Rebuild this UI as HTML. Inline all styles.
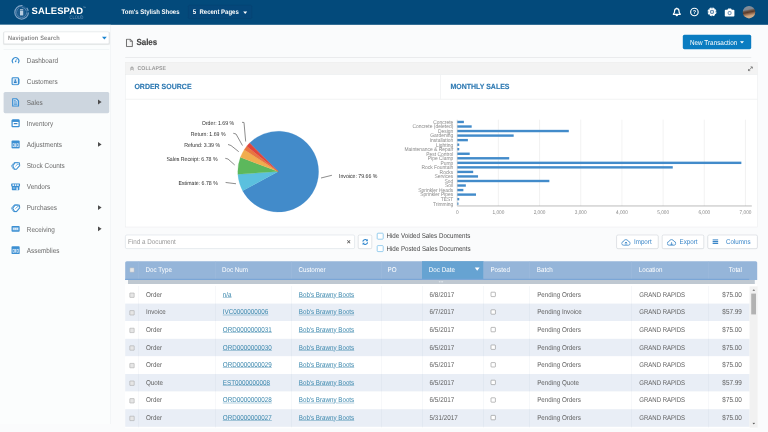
<!DOCTYPE html>
<html lang="en">
<head>
<meta charset="utf-8">
<title>Sales - SalesPad Cloud</title>
<style>
*{box-sizing:border-box;margin:0;padding:0}
html,body{width:768px;height:432px;overflow:hidden;background:#fafbfc}
body{font-family:"Liberation Sans",sans-serif;color:#555;text-rendering:geometricPrecision}
#app{position:absolute;left:0;top:0;width:1920px;height:1080px;transform:scale(.4);transform-origin:0 0;background:#fafbfc;overflow:hidden;filter:blur(1.3px)}
#app div,#app span,#app a{position:absolute;white-space:nowrap}
/* header */
#hdr{left:0;top:0;width:1920px;height:61.5px;background:#034a7b}
#logo{left:33.500px;top:10.500px;width:40px;height:40px}
#brand{left:79px;top:14px;font-size:23.5px;line-height:24px;font-weight:bold;color:#fff;letter-spacing:.3px}
#tm{left:208px;top:16px;font-size:4.5px;line-height:5px;color:#a9bfd4}
#cloud{left:173.5px;top:37px;font-size:12.7px;line-height:13px;color:#6d95bb;letter-spacing:0;transform:scaleX(.78);transform-origin:0 0}
#co{left:304px;top:20px;font-size:16.8px;line-height:20px;font-weight:bold;color:#fff;transform:scaleX(.893);transform-origin:0 0}
#recent{left:470px;top:13px;width:160px;height:34px;border:1px solid #0b4270;border-radius:3px;background:#05477a}
#recent span{left:11px;top:7px;font-size:16.8px;line-height:20px;font-weight:bold;color:#fff;white-space:pre;transform:scaleX(.893);transform-origin:0 0}
.caretw{width:0;height:0;border-left:5.8px solid transparent;border-right:5.8px solid transparent;border-top:6.5px solid #fff}
.hi{top:15px;width:30px;height:30px}
#avatar{left:1857px;top:15px;width:31px;height:31px;border-radius:50%;background:linear-gradient(168deg,#8a939d 0,#7f8893 30%,#6b5549 40%,#5a3b2b 50%,#9a6f52 62%,#c9a582 75%,#cdb094 100%);overflow:hidden}
/* sidebar */
#side{left:0;top:61.5px;width:275.5px;height:998px;background:#fbfdfd;border-right:1.5px solid #e9edef}
#nsearch{left:9px;top:17.5px;width:264px;height:31px;border:1px solid #cfd4d9;box-shadow:0 1px 2px rgba(0,0,0,.08);border-radius:3px;background:#fff}
#nsearch span{left:10px;top:6px;font-size:15.7px;line-height:18px;font-weight:bold;color:#8a8a8a;letter-spacing:.5px;transform:scaleX(.893);transform-origin:0 0}
#nsearch i{position:absolute;left:245px;top:12px;width:0;height:0;border-left:6px solid transparent;border-right:6px solid transparent;border-top:7px solid #1b84d0}
#nsep{left:9px;top:62px;width:264px;height:1px;background:#e3e7ea}
.ni{left:9px;width:264px;height:53px;border-radius:4px}
.ni.act{background:#cdd6df}
.ni .ico{left:18.2px;top:15px;width:24px;height:22.2px}
.ni .ico svg{width:24px;height:22.2px;display:block}
.ni .nt{left:58px;top:16.5px;font-size:17.9px;line-height:20px;color:#6a6a6a;transform:scaleX(.893);transform-origin:0 0}
.ni .arr{left:235.5px;top:19.5px;width:0;height:0;border-top:6.9px solid transparent;border-bottom:6.9px solid transparent;border-left:9.2px solid #4c4c4c}
/* main */
#title{left:341px;top:91px;font-size:22px;line-height:28px;font-weight:bold;color:#444;-webkit-text-stroke:.4px #444;transform:scaleX(.905);transform-origin:0 0}
#ticon{left:314px;top:95.5px;width:19px;height:22.5px}
#newbtn{left:1707px;top:87px;width:171px;height:36px;background:#0a7cc1;border-radius:4px}
#newbtn span{left:17.5px;top:9px;font-size:17.8px;line-height:20px;color:#fff;transform:scaleX(.893);transform-origin:0 0}
#newbtn i{position:absolute;left:143px;top:16px;width:0;height:0;border-left:5.8px solid transparent;border-right:5.8px solid transparent;border-top:6.5px solid #fff}
#hr{left:313px;top:143px;width:1565px;height:2px;background:#e7e8e9}
#cbar{left:313px;top:155px;width:1581px;height:32px;background:#f3f3f3;border:1px solid #ebebeb}
#cbar span{left:30px;top:6px;font-size:14px;line-height:18px;font-weight:bold;color:#999;letter-spacing:0;transform:scaleX(.93);transform-origin:0 0}
#panel{left:313px;top:186px;width:1581px;height:382px;background:#fff;border:1px solid #e4e6e8}
#phdr{left:313px;top:247px;width:1581px;height:2px;background:#eef0f1}
#pvd{left:1100px;top:187px;width:2px;height:61px;background:#f0f2f3}
.ptitle{top:206px;font-size:18.9px;line-height:22px;font-weight:bold;color:#2a77b1;-webkit-text-stroke:.3px #2a77b1;transform:scaleX(.926);transform-origin:0 0}
svg text.pl{font-family:"Liberation Sans",sans-serif;font-size:14.56px;fill:#2b2b2b}
svg text.bl{font-family:"Liberation Sans",sans-serif;font-size:13.8px;fill:#8a8a8a}
svg text.al{font-family:"Liberation Sans",sans-serif;font-size:13.2px;fill:#868686}
#chart{position:absolute;left:0;top:0;width:1920px;height:1080px;pointer-events:none}
/* toolbar */
#find{left:313px;top:587px;width:574px;height:35px;border:1px solid #c6ced8;border-radius:4px;background:#fff}
#find span{left:6px;top:7px;font-size:17.6px;line-height:20px;color:#999;transform:scaleX(.893);transform-origin:0 0}
#find b{position:absolute;left:553px;top:8px;font-size:17px;line-height:20px;color:#555;font-weight:bold}
#refresh{left:895px;top:587px;width:35px;height:35px;border:1px solid #bcc2c9;box-shadow:0 1px 1px rgba(0,0,0,.06);border-radius:4px;background:#fff}
.chk{left:942px;width:17px;height:17px;border:2px solid #7fc2ea;border-radius:3px;background:#fff}
.chl{left:966px;font-size:17.4px;line-height:20px;color:#444;transform:scaleX(.893);transform-origin:0 0}
.tbtn{top:587px;height:35px;border:1px solid #bcc2c9;box-shadow:0 1px 1px rgba(0,0,0,.06);border-radius:4px;background:#fff}
.tbtn span{top:7px;font-size:17.4px;line-height:20px;color:#3a86c8;transform:scaleX(.893);transform-origin:0 0}
/* grid */
#ghead{left:313px;top:653px;width:1580px;height:47px;background:#95b5d9;border-radius:4px 4px 0 0}
#ghb{left:313px;top:696.5px;width:1560px;height:3.5px;background:#7ba6d6}
#ghead .h{top:0;height:43.5px;font-size:17.5px;line-height:43.5px;color:#fff}
#ghead .h span{left:0;top:0;transform:scaleX(.893);transform-origin:0 0}
#ghead .h span.r{left:auto;right:0;transform-origin:100% 0}
#ghead u{position:absolute;top:0;width:1px;height:43.5px;background:#a2bede}
#gsort{left:741.5px;top:653px;width:154.5px;height:47px;background:#66a3d2}
#gfil{left:320px;top:700px;width:1567px;height:10px;background:#bfc8d1}
#gwhite{left:313px;top:710px;width:1580px;height:361px;background:#fff}
.row{left:313px;width:1561px;height:44px;background:#fff}
.row.alt{background:#e9eef6}
.row .c{top:0;height:44px;font-size:17.5px;line-height:43.5px;color:#5f5f5f;transform:scaleX(.893);transform-origin:0 0}
#grows u{position:absolute;top:0;width:1.2px;height:360px;background:rgba(160,175,195,.22)}
.row a{position:static!important;color:#3a87ad;text-decoration:underline;font-size:17.4px}
.c0{left:0;width:33px;transform:none!important}
.c1{left:52px}
.c2{left:243.5px}
.c2 a{font-size:17.65px!important}
.c3{left:434px}
.c4{left:640px}
.c5{left:761px;font-size:17.7px!important}
.c6{left:896px;width:115px;transform:none!important}
.c7{left:1030px}
.c8{left:1285px;font-size:16.9px!important}
.c9{left:auto!important;right:19px;text-align:right;font-size:17.9px!important;transform-origin:100% 0!important}
.cb{left:10.5px;top:16.5px;width:12px;height:12px;border:1.5px solid #8c8c8c;border-radius:1.2px;background:#e6e6e6}
.pb{left:18px;top:15px;width:12px;height:12px;border:1.6px solid #555;border-radius:2px;background:#fff}
#sbar{left:1874px;top:716px;width:20px;height:352.5px;background:#f1f1f1}
#sthumb{left:1878px;top:734px;width:12px;height:52px;background:#b2b2b2}
</style>
</head>
<body>
<div id="app">
  <div id="hdr">
    <svg id="logo" style="position:absolute" viewBox="0 0 40 40">
      <circle cx="20" cy="20" r="17" fill="#1c5a8b"/>
      <circle cx="20" cy="20" r="17" fill="none" stroke="#80a4c7" stroke-width="2.800" stroke-dasharray="82 12 8 5"/>
      <circle cx="20" cy="20" r="12.500" fill="#0d5285" stroke="#5c8ab5" stroke-width="2.200" stroke-dasharray="50 8 16 5"/>
      <circle cx="20" cy="20" r="9.500" fill="#1f5c8d"/>
      <rect x="16" y="12.500" width="8" height="2.200" fill="#e6eef5"/>
      <rect x="16" y="16" width="8" height="11.500" fill="#b9cde0"/>
    </svg>
    <div id="brand">SALESPAD</div>
    <div id="tm">TM</div>
    <div id="cloud">CLOUD</div>
    <div id="co">Tom's Stylish Shoes</div>
    <div id="recent"><span>5  Recent Pages</span><i class="caretw" style="position:absolute;left:136.5px;top:14.5px"></i></div>
    <svg class="hi" style="position:absolute;left:1677px" viewBox="0 0 30 30"><path d="M15 6.500c-3.600 0-5.500 2.700-5.500 6 0 3.600-1 5.800-3 7.200v1.300h17v-1.300c-2-1.400-3-3.600-3-7.200 0-3.300-1.900-6-5.500-6z" fill="none" stroke="#fff" stroke-width="3" stroke-linejoin="round"/><path d="M12 22.500a3 3 0 0 0 6 0z" fill="#fff"/><rect x="13.500" y="4" width="3" height="3" rx="1.500" fill="#fff"/></svg>
    <svg class="hi" style="position:absolute;left:1721px" viewBox="0 0 30 30"><circle cx="15" cy="15" r="9.400" fill="none" stroke="#fff" stroke-width="3"/><text x="15" y="20" text-anchor="middle" font-family="Liberation Sans, sans-serif" font-weight="bold" font-size="14" fill="#fff">?</text></svg>
    <svg class="hi" style="position:absolute;left:1765px" viewBox="0 0 30 30"><circle cx="15" cy="14.700" r="9.800" fill="none" stroke="#fff" stroke-width="2.600" stroke-dasharray="5.200 2.500"/><circle cx="15" cy="14.700" r="7.300" fill="#5d87ae" stroke="#fff" stroke-width="3.800"/><circle cx="15" cy="14.700" r="2.800" fill="#dfe8f0"/></svg>
    <svg class="hi" style="position:absolute;left:1809px;top:16px" viewBox="0 0 30 30"><path d="M5 8.500h4.500l2-3.500h7l2 3.500H25a2 2 0 0 1 2 2v13a2 2 0 0 1-2 2H5a2 2 0 0 1-2-2v-13a2 2 0 0 1 2-2z" fill="#fff"/><circle cx="15" cy="16.800" r="5.200" fill="#6f93b5"/><circle cx="15" cy="16.800" r="2.800" fill="#fff"/></svg>
    <div id="avatar"></div>
  </div>

  <div id="side">
    <div id="nsearch"><span>Navigation Search</span><i></i></div>
    <div id="nsep"></div>
  </div>
  <div id="navwrap" style="left:0;top:0;width:275px;height:1080px">
<div class="ni" style="top:124.0px"><span class="ico"><svg viewBox="0 0 26 24"><path d="M5.500 19.500A9 9 0 1 1 20.500 19.500" fill="none" stroke="#3b8fd2" stroke-width="3" stroke-linecap="round"/><circle cx="13" cy="16" r="2.200" fill="#3b8fd2"/><path d="M13 16L15 10.500" stroke="#3b8fd2" stroke-width="2" stroke-linecap="round"/></svg></span><span class="nt">Dashboard</span></div>
<div class="ni" style="top:176.8px"><span class="ico"><svg viewBox="0 0 26 24"><rect x="3.500" y="2.500" width="17.500" height="19" rx="2.500" fill="#dcebf8" stroke="#3b8fd2" stroke-width="3"/><rect x="20.500" y="5" width="3" height="14" rx="1" fill="#3b8fd2"/><circle cx="12.200" cy="8.800" r="2.300" fill="#2f7fc4"/><path d="M8.500 16.500v-2.500a2 2 0 0 1 2-2h3.400a2 2 0 0 1 2 2v2.500z" fill="#2f7fc4"/></svg></span><span class="nt">Customers</span></div>
<div class="ni act" style="top:229.6px"><span class="ico"><svg viewBox="0 0 26 24"><path d="M5 2h10.500l5.500 5.500V22H5z" fill="#d6e6f5" stroke="#3b8fd2" stroke-width="3" stroke-linejoin="round"/><path d="M8 6.500h5.500M8 10.500h10M8 14h10M8 17.500h10" stroke="#3b8fd2" stroke-width="2"/></svg></span><span class="nt">Sales</span><span class="arr"></span></div>
<div class="ni" style="top:282.4px"><span class="ico"><svg viewBox="0 0 26 24"><rect x="3.500" y="3" width="19" height="18.500" rx="2" fill="#fff" stroke="#3b8fd2" stroke-width="3.400"/><rect x="3.500" y="3" width="19" height="5.500" fill="#3b8fd2"/><rect x="8" y="11.500" width="10" height="3.200" fill="#2f7fc4"/></svg></span><span class="nt">Inventory</span></div>
<div class="ni" style="top:335.2px"><span class="ico"><svg viewBox="0 0 26 24"><rect x="2" y="1.500" width="22" height="21.500" rx="2.500" fill="#3b8fd2"/><rect x="5" y="9" width="5.500" height="10" fill="#e9f2fb"/><rect x="12" y="9" width="2.500" height="10" fill="#e9f2fb"/><rect x="16" y="9" width="5" height="10" fill="#e9f2fb"/><rect x="6.500" y="11" width="2.500" height="6" fill="#3b8fd2"/><rect x="17.500" y="11" width="2" height="6" fill="#3b8fd2"/></svg></span><span class="nt">Adjustments</span><span class="arr"></span></div>
<div class="ni" style="top:388.0px"><span class="ico"><svg viewBox="0 0 28 24"><path d="M1.500 12.500L9.500 3h11l2.500 8-9.500 11h-6z" fill="#fff" stroke="#3b8fd2" stroke-width="2" stroke-linejoin="round"/><path d="M5.500 12.500L12.500 3.500h12l2 7.500-10 11.500h-5.500z" fill="#fff" stroke="#3b8fd2" stroke-width="3.200" stroke-linejoin="round"/><circle cx="21" cy="8" r="1.800" fill="#3b8fd2"/><path d="M13.500 14l6-6" stroke="#3b8fd2" stroke-width="2.200"/></svg></span><span class="nt">Stock Counts</span></div>
<div class="ni" style="top:440.8px"><span class="ico"><svg viewBox="0 0 28 24"><path d="M3 2h22a2 2 0 0 1 2 2v5a3 3 0 0 1-2 2.800V20a2 2 0 0 1-2 2H5a2 2 0 0 1-2-2v-8.200A3 3 0 0 1 1 9V4a2 2 0 0 1 2-2z" fill="#3b8fd2"/><rect x="5" y="4.500" width="4.500" height="5" fill="#eaf3fb"/><rect x="11.700" y="4.500" width="4.500" height="5" fill="#eaf3fb"/><rect x="18.500" y="4.500" width="4.500" height="5" fill="#eaf3fb"/><rect x="6" y="13.500" width="7" height="4" fill="#8fc1ea"/><rect x="16.500" y="13.500" width="4" height="8.500" fill="#eaf3fb"/></svg></span><span class="nt">Vendors</span></div>
<div class="ni" style="top:493.6px"><span class="ico"><svg viewBox="0 0 28 24"><path d="M1.500 12.500L9.500 3h11l2.500 8-9.500 11h-6z" fill="#fff" stroke="#3b8fd2" stroke-width="2" stroke-linejoin="round"/><path d="M5.500 12.500L12.500 3.500h12l2 7.500-10 11.500h-5.500z" fill="#fff" stroke="#3b8fd2" stroke-width="3.200" stroke-linejoin="round"/><circle cx="21" cy="8" r="1.800" fill="#3b8fd2"/><path d="M13.500 14l6-6" stroke="#3b8fd2" stroke-width="2.200"/></svg></span><span class="nt">Purchases</span><span class="arr"></span></div>
<div class="ni" style="top:546.4px"><span class="ico"><svg viewBox="0 0 26 24"><rect x="2" y="4" width="22" height="16" rx="2.500" fill="#3b8fd2"/><rect x="5" y="8" width="16" height="8" fill="#9cc6ea"/><rect x="6.500" y="9.500" width="3.500" height="5" fill="#dcebf8"/><rect x="11.300" y="9.500" width="3.500" height="5" fill="#dcebf8"/><rect x="16" y="9.500" width="3.500" height="5" fill="#dcebf8"/></svg></span><span class="nt">Receiving</span><span class="arr"></span></div>
<div class="ni" style="top:599.2px"><span class="ico"><svg viewBox="0 0 26 24"><rect x="2" y="1.500" width="22" height="21.500" rx="2.500" fill="#3b8fd2"/><rect x="5" y="9" width="5.500" height="10" fill="#e9f2fb"/><rect x="12" y="9" width="2.500" height="10" fill="#e9f2fb"/><rect x="16" y="9" width="5" height="10" fill="#e9f2fb"/><rect x="6.500" y="11" width="2.500" height="6" fill="#3b8fd2"/><rect x="17.500" y="11" width="2" height="6" fill="#3b8fd2"/></svg></span><span class="nt">Assemblies</span></div>
  </div>

  <svg id="ticon" style="position:absolute" viewBox="0 0 19 23"><path d="M2 2h10l5 5v14H2z" fill="#f4f4f4" stroke="#555" stroke-width="2.200" stroke-linejoin="round"/><path d="M11.500 2v5.500H17" fill="none" stroke="#555" stroke-width="1.800"/></svg>
  <div id="title">Sales</div>
  <div id="newbtn"><span>New Transaction</span><i></i></div>
  <div id="hr"></div>
  <div id="cbar"><svg style="position:absolute;left:10px;top:9px;width:12px;height:12px" viewBox="0 0 12 12"><path d="M1.500 6L6 2l4.500 4M1.500 10.500L6 6.500l4.500 4" fill="none" stroke="#8c8c8c" stroke-width="2.300"/></svg><span>COLLAPSE</span>
    <svg style="position:absolute;left:1554.5px;top:8.5px;width:14px;height:14px" viewBox="0 0 16 16"><path d="M3 13L13 3M8.500 2.500H13.500V7.500M2.500 8.500V13.500H7.500" fill="none" stroke="#5f5f5f" stroke-width="2"/></svg>
  </div>
  <div id="panel"></div>
  <div id="phdr"></div>
  <div id="pvd"></div>
  <div class="ptitle" style="left:336px">ORDER SOURCE</div>
  <div class="ptitle" style="left:1126px">MONTHLY SALES</div>

  <svg id="chart" viewBox="0 0 1920 1080">
<path d="M695.5 429.0L624.1 357.6A101.0 101.0 0 1 1 606.5 476.7Z" fill="#428bca" stroke="#428bca" stroke-width="0.6"/>
<path d="M695.5 429.0L606.5 476.7A101.0 101.0 0 0 1 594.7 435.7Z" fill="#5bc0de" stroke="#5bc0de" stroke-width="0.6"/>
<path d="M695.5 429.0L594.7 435.7A101.0 101.0 0 0 1 601.0 393.4Z" fill="#5cb85c" stroke="#5cb85c" stroke-width="0.6"/>
<path d="M695.5 429.0L601.0 393.4A101.0 101.0 0 0 1 610.6 374.2Z" fill="#f0ad4e" stroke="#f0ad4e" stroke-width="0.6"/>
<path d="M695.5 429.0L610.6 374.2A101.0 101.0 0 0 1 616.9 365.6Z" fill="#e8763f" stroke="#e8763f" stroke-width="0.6"/>
<path d="M695.5 429.0L616.9 365.6A101.0 101.0 0 0 1 624.1 357.6Z" fill="#de453c" stroke="#de453c" stroke-width="0.6"/>
<polyline points="605.0,305.8 610.0,306.2 614.2,353.8" fill="none" stroke="#888" stroke-width="2.4"/>
<polyline points="583.2,333.2 590.0,335.0 606.2,363.8" fill="none" stroke="#888" stroke-width="2.4"/>
<polyline points="570.0,361.2 577.5,363.8 596.8,379.2" fill="none" stroke="#888" stroke-width="2.4"/>
<polyline points="563.2,395.8 570.0,397.5 586.8,412.5" fill="none" stroke="#888" stroke-width="2.4"/>
<polyline points="564.0,456.2 590.0,459.4" fill="none" stroke="#888" stroke-width="2.4"/>
<polyline points="802.5,445.0 829.8,438.2" fill="none" stroke="#888" stroke-width="2.4"/>
<text transform="translate(585.5 311.8) scale(.893 1)" text-anchor="end" class="pl">Order: 1.69 %</text>
<text transform="translate(563.8 339.3) scale(.893 1)" text-anchor="end" class="pl">Return: 1.69 %</text>
<text transform="translate(550.0 367.3) scale(.893 1)" text-anchor="end" class="pl">Refund: 3.39 %</text>
<text transform="translate(543.8 401.8) scale(.893 1)" text-anchor="end" class="pl">Sales Receipt: 6.78 %</text>
<text transform="translate(544.5 461.8) scale(.893 1)" text-anchor="end" class="pl">Estimate: 6.78 %</text>
<text transform="translate(847.5 445.3) scale(.893 1)" text-anchor="start" class="pl">Invoice: 79.66 %</text>
<line x1="1246.0" y1="299.2" x2="1246.0" y2="514.9" stroke="#dfdfdf" stroke-width="1"/>
<line x1="1348.9" y1="299.2" x2="1348.9" y2="514.9" stroke="#dfdfdf" stroke-width="1"/>
<line x1="1451.8" y1="299.2" x2="1451.8" y2="514.9" stroke="#dfdfdf" stroke-width="1"/>
<line x1="1554.8" y1="299.2" x2="1554.8" y2="514.9" stroke="#dfdfdf" stroke-width="1"/>
<line x1="1657.8" y1="299.2" x2="1657.8" y2="514.9" stroke="#dfdfdf" stroke-width="1"/>
<line x1="1760.7" y1="299.2" x2="1760.7" y2="514.9" stroke="#dfdfdf" stroke-width="1"/>
<line x1="1863.7" y1="299.2" x2="1863.7" y2="514.9" stroke="#dfdfdf" stroke-width="1"/>
<rect x="1143.0" y="301.9" width="16.7" height="6" fill="#428bca"/>
<text transform="translate(1133.2 309.6) scale(.893 1)" text-anchor="end" class="bl">Concrete</text>
<rect x="1143.0" y="313.3" width="36.2" height="6" fill="#428bca"/>
<text transform="translate(1133.2 321.0) scale(.893 1)" text-anchor="end" class="bl">Concrete (deleted)</text>
<rect x="1143.0" y="324.6" width="279.0" height="6" fill="#428bca"/>
<text transform="translate(1133.2 332.3) scale(.893 1)" text-anchor="end" class="bl">Design</text>
<rect x="1143.0" y="336.0" width="141.2" height="6" fill="#428bca"/>
<text transform="translate(1133.2 343.7) scale(.893 1)" text-anchor="end" class="bl">Gardening</text>
<rect x="1143.0" y="347.3" width="26.7" height="6" fill="#428bca"/>
<text transform="translate(1133.2 355.0) scale(.893 1)" text-anchor="end" class="bl">Installation</text>
<rect x="1143.0" y="358.7" width="5.1" height="6" fill="#428bca"/>
<text transform="translate(1133.2 366.4) scale(.893 1)" text-anchor="end" class="bl">Lighting</text>
<rect x="1143.0" y="370.0" width="5.1" height="6" fill="#428bca"/>
<text transform="translate(1133.2 377.7) scale(.893 1)" text-anchor="end" class="bl">Maintenance &amp; Repair</text>
<rect x="1143.0" y="381.4" width="31.3" height="6" fill="#428bca"/>
<text transform="translate(1133.2 389.1) scale(.893 1)" text-anchor="end" class="bl">Pest Control</text>
<rect x="1143.0" y="392.7" width="130.0" height="6" fill="#428bca"/>
<text transform="translate(1133.2 400.4) scale(.893 1)" text-anchor="end" class="bl">Pipe Clamp</text>
<rect x="1143.0" y="404.1" width="710.4" height="6" fill="#428bca"/>
<text transform="translate(1133.2 411.8) scale(.893 1)" text-anchor="end" class="bl">Pump</text>
<rect x="1143.0" y="415.4" width="538.9" height="6" fill="#428bca"/>
<text transform="translate(1133.2 423.1) scale(.893 1)" text-anchor="end" class="bl">Rock Fountain</text>
<rect x="1143.0" y="426.8" width="40.0" height="6" fill="#428bca"/>
<text transform="translate(1133.2 434.5) scale(.893 1)" text-anchor="end" class="bl">Rocks</text>
<rect x="1143.0" y="438.1" width="52.1" height="6" fill="#428bca"/>
<text transform="translate(1133.2 445.8) scale(.893 1)" text-anchor="end" class="bl">Services</text>
<rect x="1143.0" y="449.5" width="230.4" height="6" fill="#428bca"/>
<text transform="translate(1133.2 457.2) scale(.893 1)" text-anchor="end" class="bl">Sod</text>
<rect x="1143.0" y="460.8" width="21.6" height="6" fill="#428bca"/>
<text transform="translate(1133.2 468.5) scale(.893 1)" text-anchor="end" class="bl">Soil</text>
<rect x="1143.0" y="472.2" width="15.4" height="6" fill="#428bca"/>
<text transform="translate(1133.2 479.9) scale(.893 1)" text-anchor="end" class="bl">Sprinkler Heads</text>
<rect x="1143.0" y="483.5" width="47.0" height="6" fill="#428bca"/>
<text transform="translate(1133.2 491.2) scale(.893 1)" text-anchor="end" class="bl">Sprinkler Pipes</text>
<rect x="1143.0" y="494.9" width="5.1" height="6" fill="#428bca"/>
<text transform="translate(1133.2 502.6) scale(.893 1)" text-anchor="end" class="bl">TEST</text>
<rect x="1143.0" y="506.2" width="3.1" height="6" fill="#428bca"/>
<text transform="translate(1133.2 513.9) scale(.893 1)" text-anchor="end" class="bl">Trimming</text>
<line x1="1143.0" y1="299.2" x2="1143.0" y2="514.9" stroke="#b5b5b5" stroke-width="1.2"/>
<line x1="1143.0" y1="514.9" x2="1879.5" y2="514.9" stroke="#8e8e8e" stroke-width="1.5"/>
<text transform="translate(1143.0 535.1) scale(.893 1)" text-anchor="middle" class="al">0</text>
<text transform="translate(1246.0 535.1) scale(.893 1)" text-anchor="middle" class="al">1,000</text>
<text transform="translate(1348.9 535.1) scale(.893 1)" text-anchor="middle" class="al">2,000</text>
<text transform="translate(1451.8 535.1) scale(.893 1)" text-anchor="middle" class="al">3,000</text>
<text transform="translate(1554.8 535.1) scale(.893 1)" text-anchor="middle" class="al">4,000</text>
<text transform="translate(1657.8 535.1) scale(.893 1)" text-anchor="middle" class="al">5,000</text>
<text transform="translate(1760.7 535.1) scale(.893 1)" text-anchor="middle" class="al">6,000</text>
<text transform="translate(1863.7 535.1) scale(.893 1)" text-anchor="middle" class="al">7,000</text>
  </svg>

  <div id="find"><span>Find a Document</span><b>&#215;</b></div>
  <div id="refresh"><svg style="position:absolute;left:8px;top:8px;width:18px;height:18px" viewBox="0 0 18 18"><path d="M3 8a6 6 0 0 1 10.500-3" fill="none" stroke="#2b83cc" stroke-width="2.600"/><path d="M15.500 1.500v5.500h-5.500z" fill="#2b83cc"/><path d="M15 10a6 6 0 0 1-10.500 3" fill="none" stroke="#2b83cc" stroke-width="2.600"/><path d="M2.500 16.500v-5.500h5.500z" fill="#2b83cc"/></svg></div>
  <div class="chk" style="top:582px"></div>
  <div class="chl" style="top:580.3px">Hide Voided Sales Documents</div>
  <div class="chk" style="top:612.5px"></div>
  <div class="chl" style="top:611px">Hide Posted Sales Documents</div>

  <div class="tbtn" style="left:1541px;width:105px"><svg style="position:absolute;left:10.5px;top:8.5px;width:24px;height:18px" viewBox="0 0 24 18"><path d="M6 16a4.500 4.500 0 0 1-.5-9A6.500 6.500 0 0 1 18 6.500a4.800 4.800 0 0 1 .5 9.500z" fill="none" stroke="#3a86c8" stroke-width="2"/><path d="M12 15V8.500M9 11l3-3 3 3" fill="none" stroke="#3a86c8" stroke-width="2"/></svg><span style="left:43px">Import</span></div>
  <div class="tbtn" style="left:1655px;width:105px"><svg style="position:absolute;left:10.5px;top:8.5px;width:24px;height:18px" viewBox="0 0 24 18"><path d="M6 16a4.500 4.500 0 0 1-.5-9A6.500 6.500 0 0 1 18 6.500a4.800 4.800 0 0 1 .5 9.500z" fill="none" stroke="#3a86c8" stroke-width="2"/><path d="M12 8.500V15M9 12.500l3 3 3-3" fill="none" stroke="#3a86c8" stroke-width="2"/></svg><span style="left:43px">Export</span></div>
  <div class="tbtn" style="left:1769px;width:125px"><svg style="position:absolute;left:11px;top:10px;width:15px;height:12px" viewBox="0 0 15 12"><rect x="0" y="0" width="15" height="3" fill="#3a86c8"/><rect x="0" y="4.500" width="15" height="3" fill="#3a86c8"/><rect x="0" y="9" width="15" height="3" fill="#3a86c8"/></svg><span style="left:45px">Columns</span></div>

  <div id="gwhite"></div>
  <div id="ghead">
    <div class="h" style="left:0;width:33px"><span class="cb" style="top:16px;left:10.5px;background:#e6e6e6;border-color:#9aa9ba;transform:none"></span></div>
    <div class="h" style="left:741.5px;width:154.5px;background:#66a3d2;height:47px"></div>
    <u style="left:33px"></u><u style="left:225px"></u><u style="left:416px"></u><u style="left:640px"></u><u style="left:896px"></u><u style="left:1011px"></u><u style="left:1265px"></u><u style="left:1458px"></u>
    <div class="h" style="left:51px"><span>Doc Type</span></div>
    <div class="h" style="left:241.5px"><span>Doc Num</span></div>
    <div class="h" style="left:432.5px"><span>Customer</span></div>
    <div class="h" style="left:656px"><span>PO</span></div>
    <div class="h" style="left:759px"><span>Doc Date</span></div>
    <i style="position:absolute;left:873.5px;top:16px;width:0;height:0;border-left:6px solid transparent;border-right:6px solid transparent;border-top:8px solid #fff"></i>
    <div class="h" style="left:913px"><span>Posted</span></div>
    <div class="h" style="left:1029px"><span>Batch</span></div>
    <div class="h" style="left:1284px"><span>Location</span></div>
    <div class="h" style="left:1542px;width:0"><span class="r">Total</span></div>
  </div>
  <div id="ghb"></div>
  <div id="gfil"><span style="left:777px;top:-.5px;font-size:9px;line-height:9px;color:#eef2f6;letter-spacing:1px">&#8226;&#8226;&#8226;</span></div>
  <div id="grows" style="left:0;top:715px;width:1920px;height:353.5px;overflow:hidden">
<div class="row" style="top:0px"><div class="c c0"><span class="cb"></span></div><div class="c c1">Order</div><div class="c c2"><a>n/a</a></div><div class="c c3"><a>Bob's Brawny Boots</a></div><div class="c c4"></div><div class="c c5">6/8/2017</div><div class="c c6"><span class="pb"></span></div><div class="c c7">Pending Orders</div><div class="c c8">GRAND RAPIDS</div><div class="c c9">$75.00</div></div>
<div class="row alt" style="top:44px"><div class="c c0"><span class="cb"></span></div><div class="c c1">Invoice</div><div class="c c2"><a>IVC0000000006</a></div><div class="c c3"><a>Bob's Brawny Boots</a></div><div class="c c4"></div><div class="c c5">6/7/2017</div><div class="c c6"><span class="pb"></span></div><div class="c c7">Pending Invoice</div><div class="c c8">GRAND RAPIDS</div><div class="c c9">$57.99</div></div>
<div class="row" style="top:88px"><div class="c c0"><span class="cb"></span></div><div class="c c1">Order</div><div class="c c2"><a>ORD0000000031</a></div><div class="c c3"><a>Bob's Brawny Boots</a></div><div class="c c4"></div><div class="c c5">6/5/2017</div><div class="c c6"><span class="pb"></span></div><div class="c c7">Pending Orders</div><div class="c c8">GRAND RAPIDS</div><div class="c c9">$75.00</div></div>
<div class="row alt" style="top:132px"><div class="c c0"><span class="cb"></span></div><div class="c c1">Order</div><div class="c c2"><a>ORD0000000030</a></div><div class="c c3"><a>Bob's Brawny Boots</a></div><div class="c c4"></div><div class="c c5">6/5/2017</div><div class="c c6"><span class="pb"></span></div><div class="c c7">Pending Orders</div><div class="c c8">GRAND RAPIDS</div><div class="c c9">$75.00</div></div>
<div class="row" style="top:176px"><div class="c c0"><span class="cb"></span></div><div class="c c1">Order</div><div class="c c2"><a>ORD0000000029</a></div><div class="c c3"><a>Bob's Brawny Boots</a></div><div class="c c4"></div><div class="c c5">6/5/2017</div><div class="c c6"><span class="pb"></span></div><div class="c c7">Pending Orders</div><div class="c c8">GRAND RAPIDS</div><div class="c c9">$75.00</div></div>
<div class="row alt" style="top:220px"><div class="c c0"><span class="cb"></span></div><div class="c c1">Quote</div><div class="c c2"><a>EST0000000008</a></div><div class="c c3"><a>Bob's Brawny Boots</a></div><div class="c c4"></div><div class="c c5">6/5/2017</div><div class="c c6"><span class="pb"></span></div><div class="c c7">Pending Quote</div><div class="c c8">GRAND RAPIDS</div><div class="c c9">$57.99</div></div>
<div class="row" style="top:264px"><div class="c c0"><span class="cb"></span></div><div class="c c1">Order</div><div class="c c2"><a>ORD0000000028</a></div><div class="c c3"><a>Bob's Brawny Boots</a></div><div class="c c4"></div><div class="c c5">6/5/2017</div><div class="c c6"><span class="pb"></span></div><div class="c c7">Pending Orders</div><div class="c c8">GRAND RAPIDS</div><div class="c c9">$75.00</div></div>
<div class="row alt" style="top:308px"><div class="c c0"><span class="cb"></span></div><div class="c c1">Order</div><div class="c c2"><a>ORD0000000027</a></div><div class="c c3"><a>Bob's Brawny Boots</a></div><div class="c c4"></div><div class="c c5">5/31/2017</div><div class="c c6"><span class="pb"></span></div><div class="c c7">Pending Orders</div><div class="c c8">GRAND RAPIDS</div><div class="c c9">$75.00</div></div>
<u style="left:346px"></u><u style="left:538px"></u><u style="left:729px"></u><u style="left:953px"></u><u style="left:1055px"></u><u style="left:1209px"></u><u style="left:1324px"></u><u style="left:1578px"></u><u style="left:1771px"></u>
  </div>
  <div id="sbar"></div>
  <div id="sthumb"></div>
  <svg style="position:absolute;left:1879.5px;top:722px;width:9px;height:6px" viewBox="0 0 10 7"><path d="M1 6L5 1l4 5z" fill="#666"/></svg>
  <svg style="position:absolute;left:1879.5px;top:1056px;width:9px;height:6px" viewBox="0 0 10 7"><path d="M1 1l4 5 4-5z" fill="#555"/></svg>
</div>
</body>
</html>
